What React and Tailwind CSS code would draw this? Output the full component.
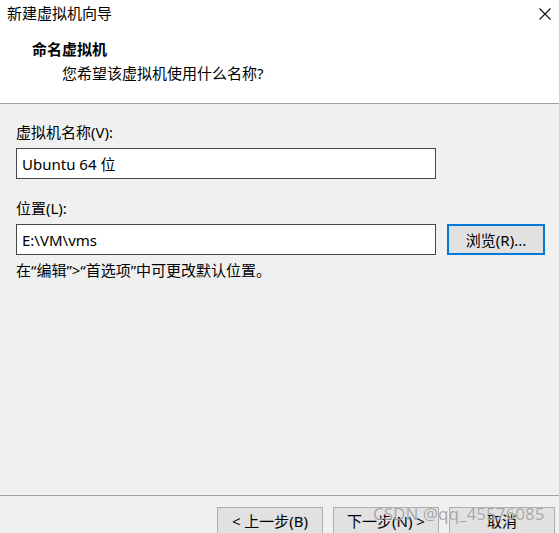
export default function App() {
  const font = { fontFamily: '"Noto Sans", "Noto Sans CJK SC", sans-serif' };
  return (
    <div className="relative w-[559px] h-[533px] overflow-hidden bg-[#f0f0f0] flex flex-col text-[15px] text-black" style={font}>
      {/* title bar */}
      <div className="h-[26px] bg-white flex items-center justify-between pl-[7px] pr-[7px]">
        <span className="leading-[20px] text-[15px]">新建虚拟机向导</span>
        <svg width="14" height="14" viewBox="0 0 14 14" className="mt-[1px]">
          <path d="M1.5 1.5 L12.5 12.5 M12.5 1.5 L1.5 12.5" stroke="#111" strokeWidth="1.1" fill="none" />
        </svg>
      </div>

      {/* header */}
      <div className="h-[78px] bg-white border-b border-[#a0a0a0] pt-[13px]">
        <div className="pl-[32px] leading-[20px] font-bold">命名虚拟机</div>
        <div className="pl-[62px] mt-[4px] leading-[20px]">您希望该虚拟机使用什么名称?</div>
      </div>

      {/* body */}
      <div className="flex-1 px-[16px] pt-[18px]">
        <div className="leading-[20px]">虚拟机名称(V):</div>
        <div className="mt-[6px] w-[420px] h-[31px] bg-white border border-[#474747] flex items-center pl-[5px]">
          <span className="leading-[20px]">Ubuntu 64 位</span>
        </div>

        <div className="mt-[19px] leading-[20px]">位置(L):</div>
        <div className="mt-[6px] flex items-center gap-[11px]">
          <div className="shrink-0 w-[420px] h-[31px] bg-white border border-[#474747] flex items-center pl-[5px]">
            <span className="leading-[20px]">E:\VM\vms</span>
          </div>
          <button className="shrink-0 w-[98px] h-[31px] bg-[#e1e1e1] border-2 border-[#0078d7] flex items-center justify-center leading-[20px]">
            浏览(R)...
          </button>
        </div>

        <div className="mt-[5px] leading-[20px]">在“编辑”&gt;“首选项”中可更改默认位置。</div>
      </div>

      {/* footer */}
      <div className="h-[38px] border-t border-[#a0a0a0] pt-[11px] pl-[217px] flex gap-[10px]">
        <button className="shrink-0 w-[106px] h-[28px] bg-[#e1e1e1] border border-[#adadad] flex items-center justify-center leading-[20px]">
          &lt; 上一步(B)
        </button>
        <button className="shrink-0 w-[106px] h-[28px] bg-[#e1e1e1] border border-[#adadad] flex items-center justify-center leading-[20px]">
          下一步(N) &gt;
        </button>
        <button className="shrink-0 w-[106px] h-[28px] bg-[#e1e1e1] border border-[#adadad] flex items-center justify-center leading-[20px]">
          取消
        </button>
      </div>

      {/* watermark */}
      <div
        className="absolute left-[373px] top-[503px] text-[17px] leading-[22px] text-[rgba(140,140,140,0.75)] whitespace-nowrap pointer-events-none"
        style={{ textShadow: '0 0 1px rgba(255,255,255,0.8)' }}
      >
        CSDN @qq_45576085
      </div>
    </div>
  );
}
